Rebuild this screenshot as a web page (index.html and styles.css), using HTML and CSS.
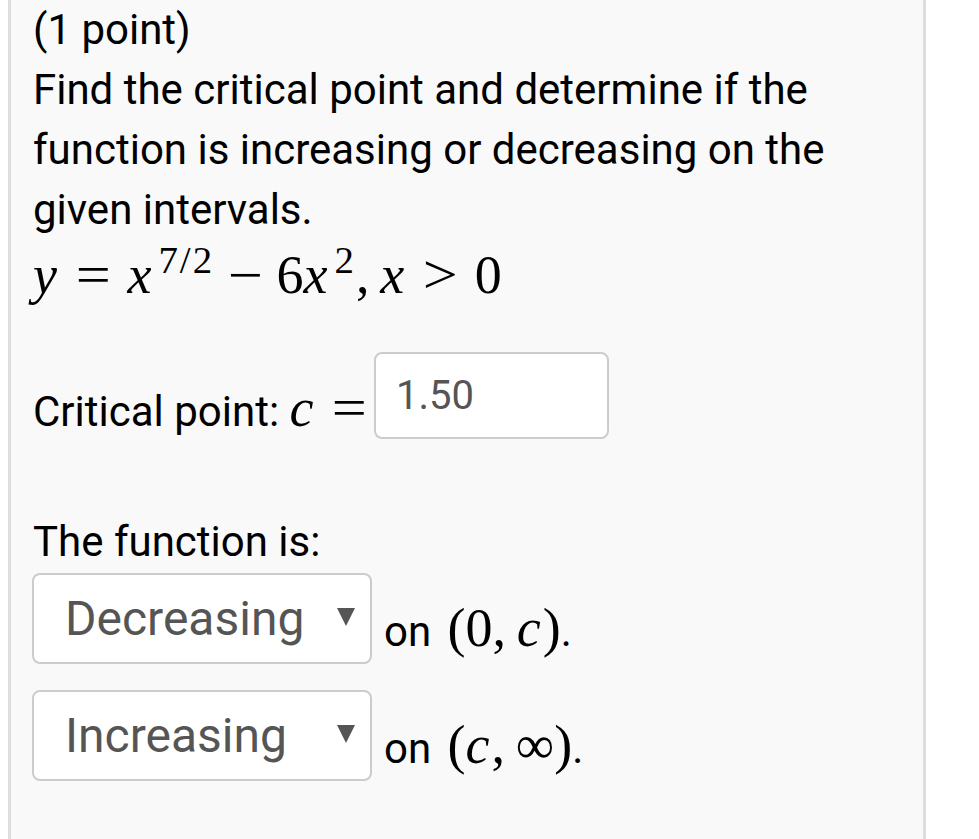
FILE: index.html
```html
<!DOCTYPE html>
<html lang="en">
<head>
  <meta charset="UTF-8" />
  <title>Critical point problem</title>
  <meta name="viewport" content="width=device-width, initial-scale=1.0" />
  <link rel="stylesheet" href="styles.css">
</head>
<body>

  <div class="problem">
    <p class="text">
      (1 point)<br>
      Find the critical point and determine if the function is increasing or decreasing on the given intervals.
    </p>

    <div class="math eq">
      <span class="mi">y</span><span class="rel">=</span><span class="mi">x</span><sup>7/2</sup><span class="bin">&minus;</span>6<span class="mi">x</span><sup>2</sup>,<span class="mi sp">x</span><span class="rel">&gt;</span>0
    </div>

    <div class="row answer-row">
      <span class="label">Critical point: <span class="math"><span class="mi">c</span><span class="rel">=</span></span></span>
      <input type="text" class="answer" value="1.50" />
    </div>

    <p class="text fn-label">The function is:</p>

    <div class="row pick-row">
      <div class="pick">
        <select>
          <option selected>Decreasing</option>
          <option>Increasing</option>
        </select>
        <svg class="arrow" width="18" height="18" viewBox="0 0 18 18"><polygon points="0,0 18,0 9,18" fill="#555"/></svg>
      </div>
      <span class="label">on <span class="math">(0,<span class="mi sp">c</span>)</span>.</span>
    </div>

    <div class="row pick-row">
      <div class="pick">
        <select>
          <option>Decreasing</option>
          <option selected>Increasing</option>
        </select>
        <svg class="arrow" width="18" height="18" viewBox="0 0 18 18"><polygon points="0,0 18,0 9,18" fill="#555"/></svg>
      </div>
      <span class="label">on <span class="math">(<span class="mi">c</span>,<span class="sp">&infin;</span>)</span>.</span>
    </div>
  </div>

</body>
</html>
```

FILE: styles.css
```css
body {
  margin: 0 0 0 8px;
  background: #fff;
  color: #000;
  font-family: Roboto, "Noto Sans", sans-serif;
  font-size: 42px;
}
.problem {
  width: 918px;
  min-height: 860px;
  box-sizing: border-box;
  background: #f9f9f9;
  border-left: 3px solid #ddd;
  border-right: 3px solid #ddd;
  padding: 0 20px 0 22px;
}
.text {
  margin: 0;
  line-height: 60px;
}
.math {
  font-family: "Liberation Serif", "DejaVu Serif", serif;
  font-size: 54px;
}
.mi {
  font-style: italic;
  margin-right: 2px;
}
.rel {
  display: inline-block;
  transform: scaleX(1.15);
  margin: 0 19px;
}
.bin {
  display: inline-block;
  transform: scaleX(1.15);
  margin: 0 16px;
}
.sp {
  margin-left: 0.2em;
}
sup {
  font-size: 0.72em;
  line-height: 0;
  vertical-align: 0.52em;
  margin-left: 5px;
  letter-spacing: 2px;
}
.eq {
  line-height: 60px;
  margin-top: 5px;
}
.row {
  display: flex;
  align-items: flex-start;
}
.label {
  line-height: 60px;
  white-space: nowrap;
}
.answer-row {
  margin-top: 47px;
}
.answer-row .label {
  margin-top: 26px;
}
.answer-row .rel {
  margin-right: 9px;
}
.answer {
  width: 235px;
  height: 87px;
  box-sizing: border-box;
  border: 2px solid #ccc;
  border-radius: 8px;
  background: #fff;
  padding: 0 20px;
  font-family: Roboto, sans-serif;
  font-size: 40px;
  color: #555;
  outline: none;
}
.fn-label {
  margin-top: 70px;
}
.pick-row {
  margin-top: 1px;
}
.pick-row + .pick-row {
  margin-top: 26px;
}
.pick {
  position: relative;
  width: 340px;
  height: 91px;
  margin-left: -1px;
}
.pick select {
  appearance: none;
  -webkit-appearance: none;
  width: 100%;
  height: 100%;
  box-sizing: border-box;
  border: 2px solid #ccc;
  border-radius: 8px;
  background: #fff;
  padding: 0 0 0 31px;
  font-family: Roboto, sans-serif;
  font-size: 48px;
  color: #555;
  outline: none;
}
.arrow {
  position: absolute;
  right: 17px;
  top: 35px;
  pointer-events: none;
}
.pick-row .label {
  margin: 25px 0 0 12px;
}
.pick-row .math {
  margin-left: 6px;
}
```
